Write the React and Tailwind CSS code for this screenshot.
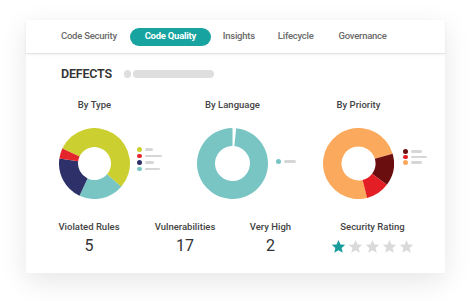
import React from "react";

const F = { fontFamily: "Roboto, 'Noto Sans', Arial, sans-serif" };

function pt(cx, cy, r, a) {
  const rad = (a * Math.PI) / 180;
  return [cx + r * Math.sin(rad), cy - r * Math.cos(rad)];
}
function seg(cx, cy, r0, r1, a0, a1) {
  const large = a1 - a0 > 180 ? 1 : 0;
  const [x1, y1] = pt(cx, cy, r1, a0);
  const [x2, y2] = pt(cx, cy, r1, a1);
  const [x3, y3] = pt(cx, cy, r0, a1);
  const [x4, y4] = pt(cx, cy, r0, a0);
  return `M${x1} ${y1} A${r1} ${r1} 0 ${large} 1 ${x2} ${y2} L${x3} ${y3} A${r0} ${r0} 0 ${large} 0 ${x4} ${y4} Z`;
}

function Donut({ segments, r0 = 17 }) {
  return (
    <svg width="71" height="71" viewBox="0 0 71 71" className="shrink-0">
      {segments.map((s, i) => (
        <path key={i} d={seg(35.5, 35.5, r0, 35.5, s[0], s[1])} fill={s[2]} />
      ))}
    </svg>
  );
}

function Legend({ items, gap }) {
  return (
    <div className="flex flex-col" style={{ gap }}>
      {items.map((it, i) => (
        <div key={i} className="flex items-center gap-[3px]">
          <span className="block w-[4.5px] h-[4.5px] rounded-full" style={{ background: it[0] }} />
          <span className="block h-[2.5px] rounded-full bg-[#d6d6d6]" style={{ width: it[1] }} />
        </div>
      ))}
    </div>
  );
}

function Star({ color }) {
  return (
    <svg width="15" height="15" viewBox="0 0 24 24">
      <path d="M12 1.5l3.2 7.1 7.6.7-5.8 5.1 1.8 7.6L12 18l-6.8 4 1.8-7.6L1.2 9.3l7.6-.7z" fill={color} />
    </svg>
  );
}

export default function App() {
  return (
    <div className="w-[474px] h-[301px] bg-white pt-[20px] pl-[26px]" style={F}>
      <div className="w-[419px] h-[253px] bg-white shadow-[0_8px_26px_rgba(0,0,0,0.10)] flex flex-col">
        <div className="h-[34px] flex items-center border-b border-[#e4e4e4] shadow-[0_1px_3px_rgba(0,0,0,0.06)] text-[9.5px] text-[#6a6a6a] font-medium tracking-[-0.25px] pl-[35px]">
          <span>Code Security</span>
          <span className="ml-[13px] h-[18px] w-[81px] rounded-full bg-[#17a3a0] text-white font-bold flex items-center justify-center">Code Quality</span>
          <span className="ml-[12px]">Insights</span>
          <span className="ml-[23px]">Lifecycle</span>
          <span className="ml-[25px]">Governance</span>
        </div>

        <div className="mt-[13px] h-[14px] flex items-center pl-[35px]">
          <span className="text-[12.5px] font-semibold text-[#333] tracking-[-0.2px]">DEFECTS</span>
          <span className="ml-[12px] w-[7.5px] h-[7.5px] rounded-full bg-[#dedede]" />
          <span className="ml-[2px] w-[81px] h-[7.5px] rounded-full bg-[#dedede]" />
        </div>

        <div className="mt-[18px] flex pl-[33px]">
          <div className="w-[138px] flex flex-col">
            <div className="w-[71px] h-[12px] flex items-center justify-center text-[9.5px] font-medium text-[#444] whitespace-nowrap">By Type</div>
            <div className="mt-[17px] flex items-start">
              <Donut
                r0={16.5}
                segments={[
                  [-65, 131, "#cbd030"],
                  [131, 205, "#78c5c4"],
                  [205, 278, "#2e3169"],
                  [278, 295, "#e3262c"],
                ]}
              />
              <div className="ml-[7px] mt-[19px]">
                <Legend
                  gap="2px"
                  items={[
                    ["#cbd030", 8],
                    ["#e3262c", 17],
                    ["#2e3169", 9],
                    ["#78c5c4", 15],
                  ]}
                />
              </div>
            </div>
          </div>
          <div className="w-[126px] flex flex-col">
            <div className="w-[71px] h-[12px] flex items-center justify-center text-[9.5px] font-medium text-[#444] whitespace-nowrap">By Language</div>
            <div className="mt-[17px] flex items-start">
              <Donut r0={17.5} segments={[[6, 360, "#78c5c4"]]} />
              <div className="ml-[8px] mt-[31px]">
                <Legend gap="2px" items={[["#78c5c4", 12]]} />
              </div>
            </div>
          </div>
          <div className="flex flex-col">
            <div className="w-[71px] h-[12px] flex items-center justify-center text-[9.5px] font-medium text-[#444] whitespace-nowrap">By Priority</div>
            <div className="mt-[17px] flex items-start">
              <Donut
                r0={17}
                segments={[
                  [-194, 74, "#fbaa5d"],
                  [74, 127, "#6b0e10"],
                  [127, 166, "#e31e24"],
                ]}
              />
              <div className="ml-[9px] mt-[21px]">
                <Legend
                  gap="1px"
                  items={[
                    ["#6b0e10", 11],
                    ["#e31e24", 16],
                    ["#fbaa5d", 11],
                  ]}
                />
              </div>
            </div>
          </div>
        </div>

        <div className="mt-[22px] flex pl-[23px] text-[#333]">
          <div className="w-[80px] flex flex-col items-center">
            <div className="h-[12px] flex items-center text-[9.5px] font-medium text-[#444]">Violated Rules</div>
            <div className="mt-[4px] h-[18px] flex items-center text-[16px]">5</div>
          </div>
          <div className="w-[112px] flex flex-col items-center">
            <div className="h-[12px] flex items-center text-[9.5px] font-medium text-[#444]">Vulnerabilities</div>
            <div className="mt-[4px] h-[18px] flex items-center text-[16px]">17</div>
          </div>
          <div className="w-[59px] flex flex-col items-center">
            <div className="h-[12px] flex items-center text-[9.5px] font-medium text-[#444] whitespace-nowrap">Very High</div>
            <div className="mt-[4px] h-[18px] flex items-center text-[16px]">2</div>
          </div>
          <div className="w-[145px] flex flex-col items-center">
            <div className="h-[12px] flex items-center text-[9.5px] font-medium text-[#444]">Security Rating</div>
            <div className="mt-[4px] h-[18px] flex items-center gap-[2px]">
              <Star color="#1a9c9c" />
              <Star color="#dadada" />
              <Star color="#dadada" />
              <Star color="#dadada" />
              <Star color="#dadada" />
            </div>
          </div>
        </div>
      </div>
    </div>
  );
}
